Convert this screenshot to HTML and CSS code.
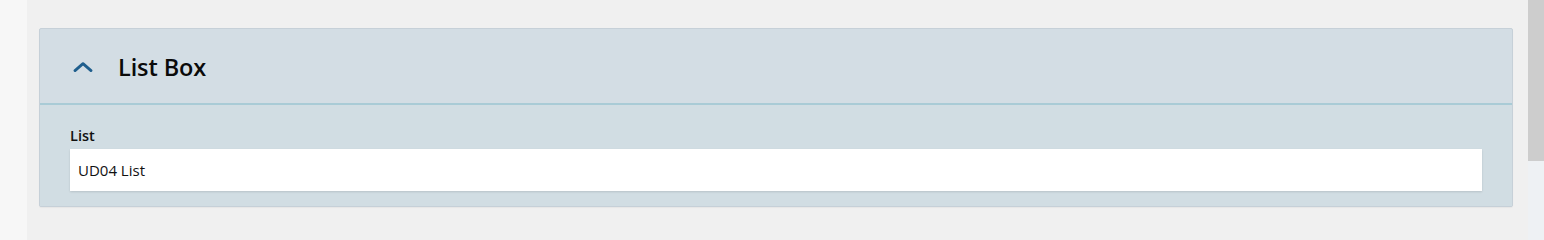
FILE: index.html
```html
<!DOCTYPE html>
<html>
<head>
<meta charset="utf-8">
<link rel="stylesheet" href="styles.css">
</head>
<body>
<div class="page">
  <div class="strip"></div>
  <main class="main">
    <section class="panel">
      <header class="panel-head">
        <svg class="chev" width="20" height="10" viewBox="0 0 20 10" aria-hidden="true">
          <path d="M2 8.6 L10 1.6 L18 8.6" fill="none" stroke="#1f5e8d" stroke-width="2.8" stroke-linecap="round" stroke-linejoin="round"/>
        </svg>
        <h2 class="panel-title">List Box</h2>
      </header>
      <div class="panel-body">
        <label class="field-label">List</label>
        <div class="field-box">UD04 List</div>
      </div>
    </section>
  </main>
  <div class="scroll">
    <div class="thumb"></div>
  </div>
</div>
</body>
</html>
```
FILE: styles.css
```css
html, body {
  margin: 0;
  padding: 0;
  height: 100%;
  overflow: hidden;
}
body {
  background: #f0f0f0;
  font-family: "Open Sans", "Noto Sans", sans-serif;
  color: #111;
}
.page {
  display: flex;
  min-height: 100vh;
}
.strip {
  width: 27px;
  flex: none;
  background: #f7f7f7;
}
.main {
  flex: 1;
  padding: 28px 15px 0 12px;
  background: #f0f0f0;
}
.scroll {
  width: 16px;
  flex: none;
  background: #eef1f4;
}
.thumb {
  height: 161px;
  background: #cdcdcd;
}
.panel {
  background: #d3dde4;
  border: 1px solid #c6d0d8;
  border-radius: 2px;
  box-shadow: 0 1px 1px rgba(0,0,0,0.04);
}
.panel-head {
  display: flex;
  align-items: center;
  padding-left: 33px;
  padding-top: 3px;
  border-bottom: 2px solid #a9cbd6;
  box-sizing: border-box;
  height: 76px;
}
.chev {
  display: block;
  margin-right: 25px;
  margin-top: -2px;
}
.panel-title {
  margin: 0;
  font-size: 23.5px;
  font-weight: 600;
  letter-spacing: -0.1px;
  color: #0a0a0a;
  line-height: 1;
}
.panel-body {
  padding: 21px 30px 15px 30px;
  background: #d1dde3;
}
.field-label {
  display: block;
  font-size: 14.5px;
  font-weight: 600;
  line-height: 20px;
  margin-bottom: 3px;
  color: #111;
}
.field-box {
  background: #fff;
  height: 42px;
  box-sizing: border-box;
  padding: 0 8px;
  display: flex;
  align-items: center;
  font-size: 15px;
  color: #111;
  box-shadow: 0 1px 2px rgba(0,0,0,0.12);
}
```
